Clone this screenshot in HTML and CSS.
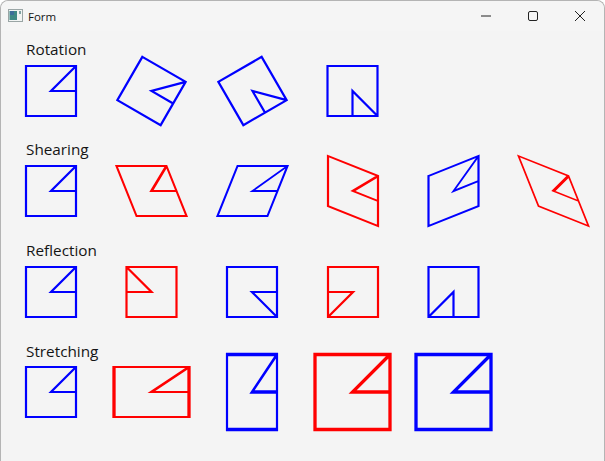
FILE: index.html
```html
<!DOCTYPE html>
<html lang="en">
<head>
<meta charset="utf-8">
<title>Form</title>
<link rel="stylesheet" href="styles.css">
</head>
<body>
<svg class="defs" width="0" height="0" aria-hidden="true">
  <defs>
    <path id="glyph" d="M-25 -25H25V25H-25Z M25 -25L0 0H25"/>
  </defs>
</svg>
<div class="window">
  <header class="titlebar">
    <svg class="app-icon" width="16" height="16" viewBox="0 0 16 16">
      <rect x="0.5" y="1.5" width="14" height="12" fill="#f2f5f4" stroke="#9aa5a5"/>
      <rect x="1.5" y="3" width="7.5" height="9" fill="#3f8a86"/>
      <rect x="2" y="3" width="4" height="4" fill="#3c6f9a"/>
      <rect x="11" y="3" width="2" height="3" fill="#7fa3a3"/>
    </svg>
    <span class="title">Form</span>
    <div class="controls">
      <svg class="control" width="47" height="30" viewBox="0 0 47 30"><path d="M18 15H28" class="control-line"/></svg>
      <svg class="control" width="47" height="30" viewBox="0 0 47 30"><rect x="18.5" y="10.5" width="9" height="9" rx="1.5" class="control-line"/></svg>
      <svg class="control" width="47" height="30" viewBox="0 0 47 30"><path d="M18 10L28 20M28 10L18 20" class="control-line"/></svg>
    </div>
  </header>
  <main class="content">
    <section class="group">
      <h2 class="label">Rotation</h2>
      <svg class="canvas" width="605" height="81" viewBox="0 61 605 81">
        <use href="#glyph" class="blue" transform="translate(51 91)"/>
        <use href="#glyph" class="blue" transform="translate(151.5 91) rotate(30)"/>
        <use href="#glyph" class="blue" transform="translate(252.5 91) rotate(60)"/>
        <use href="#glyph" class="blue" transform="translate(352.5 91) rotate(90)"/>
      </svg>
    </section>
    <section class="group">
      <h2 class="label">Shearing</h2>
      <svg class="canvas" width="605" height="81" viewBox="0 161 605 81">
        <use href="#glyph" class="blue" transform="translate(51 191)"/>
        <use href="#glyph" class="red" transform="translate(151.5 191) matrix(1 0 0.4 1 0 0)"/>
        <use href="#glyph" class="blue" transform="translate(252.5 191) matrix(1 0 -0.4 1 0 0)"/>
        <use href="#glyph" class="red" transform="translate(353 191) matrix(1 0.4 0 1 0 0)"/>
        <use href="#glyph" class="blue" transform="translate(453.5 191) matrix(1 -0.4 0 1 0 0)"/>
        <use href="#glyph" class="red" transform="translate(553.5 191) matrix(1 0.4 0.4 1 0 0)"/>
      </svg>
    </section>
    <section class="group">
      <h2 class="label">Reflection</h2>
      <svg class="canvas" width="605" height="81" viewBox="0 262 605 81">
        <use href="#glyph" class="blue" transform="translate(51 292)"/>
        <use href="#glyph" class="red" transform="translate(151.5 292) scale(-1 1)"/>
        <use href="#glyph" class="blue" transform="translate(252 292) scale(1 -1)"/>
        <use href="#glyph" class="red" transform="translate(353 292) scale(-1 -1)"/>
        <use href="#glyph" class="blue" transform="translate(453.5 292) matrix(0 1 1 0 0 0)"/>
      </svg>
    </section>
    <section class="group">
      <h2 class="label">Stretching</h2>
      <svg class="canvas" width="605" height="81" viewBox="0 363 605 81">
        <use href="#glyph" class="blue" transform="translate(51 392)"/>
        <use href="#glyph" class="red" transform="translate(151.5 392) scale(1.5 1)"/>
        <use href="#glyph" class="blue" transform="translate(252 392) scale(1 1.5)"/>
        <use href="#glyph" class="red" transform="translate(352.5 392) scale(1.5)"/>
        <use href="#glyph" class="blue" transform="translate(453.5 392) scale(1.5)"/>
      </svg>
    </section>
  </main>
</div>
</body>
</html>
```
FILE: styles.css
```css
html, body {
  margin: 0;
  height: 100%;
  background: #fff;
  overflow: hidden;
}
.defs {
  position: absolute;
}
.window {
  box-sizing: border-box;
  height: 461px;
  border: 1px solid #b4b4b4;
  border-bottom: 0;
  border-radius: 8px 8px 0 0;
  background: #f4f4f4;
  font-family: "Open Sans", "Noto Sans", sans-serif;
  color: #141414;
}
.titlebar {
  display: flex;
  align-items: center;
  height: 30px;
  padding-left: 7px;
  gap: 4px;
  background: #f5f5f5;
  border-radius: 8px 8px 0 0;
}
.title {
  font-size: 11.5px;
}
.controls {
  display: flex;
  margin-left: auto;
}
.control-line {
  fill: none;
  stroke: #222;
  stroke-width: 1;
}
.content {
  display: grid;
  grid-template-rows: 100px 101px 101px 80px;
}
.label {
  margin: 8px 0 0 25px;
  height: 22px;
  font-size: 15.3px;
  font-weight: 400;
  line-height: 21px;
}
.canvas {
  display: block;
  margin-left: -1px;
  overflow: visible;
}
.blue, .red {
  fill: none;
  stroke-width: 2.2;
}
.blue {
  stroke: #0000ff;
}
.red {
  stroke: #ff0000;
}
```
